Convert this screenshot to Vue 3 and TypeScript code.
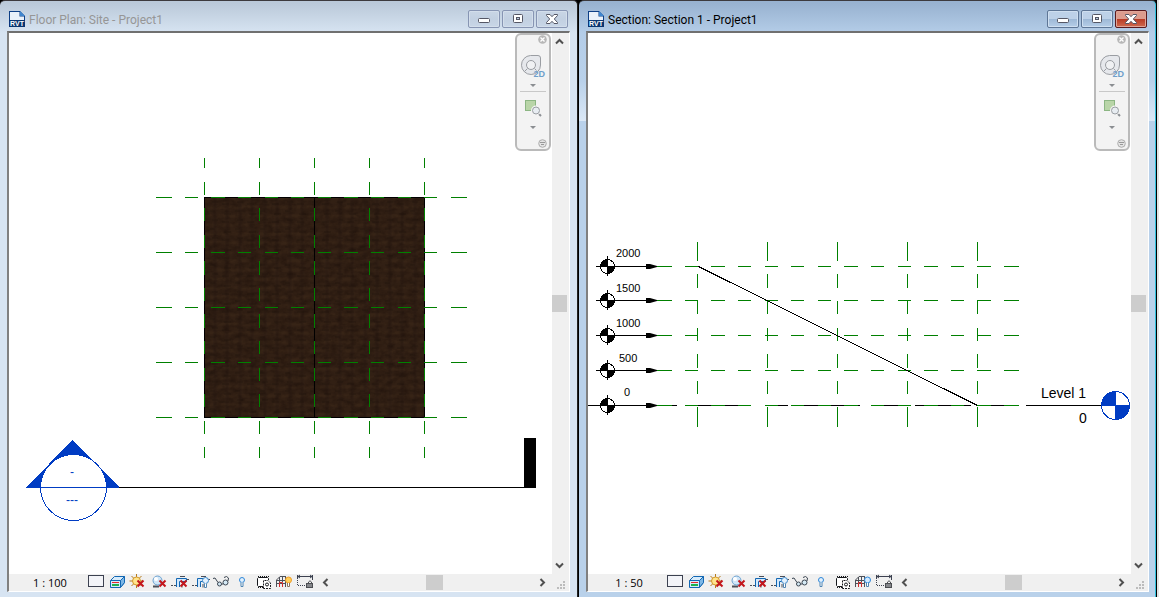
<script setup lang="ts">
type IconName =
  | 'detail' | 'style' | 'sun' | 'shadow' | 'crop' | 'cropRegion'
  | 'glasses' | 'bulb' | 'properties' | 'model' | 'constraints'

interface ViewWindow {
  id: string
  title: string
  scale: string
  active: boolean
}

const windows: ViewWindow[] = [
  { id: 'plan', title: 'Floor Plan: Site - Project1', scale: '1 : 100', active: false },
  { id: 'section', title: 'Section: Section 1 - Project1', scale: '1 : 50', active: true },
]

const tools: { name: IconName; label: string }[] = [
  { name: 'detail', label: 'Detail Level' },
  { name: 'style', label: 'Visual Style' },
  { name: 'sun', label: 'Sun Path Off' },
  { name: 'shadow', label: 'Shadows Off' },
  { name: 'crop', label: 'Do Not Crop View' },
  { name: 'cropRegion', label: 'Show Crop Region' },
  { name: 'glasses', label: 'Temporary Hide/Isolate' },
  { name: 'bulb', label: 'Reveal Hidden Elements' },
  { name: 'properties', label: 'Temporary View Properties' },
  { name: 'model', label: 'Analytical Model' },
  { name: 'constraints', label: 'Reveal Constraints' },
]

// Dashes are filled one-pixel bars, so their ends stay on whole pixels
type Span = [number, number]
const horizontal = (y: number, spans: Span[]) => spans.map(([a, b]) => `M${a} ${y}H${b}V${y + 1}H${a}Z`).join('')
const vertical = (x: number, spans: Span[]) => spans.map(([a, b]) => `M${x} ${a}V${b}H${x + 1}V${a}Z`).join('')

// Site plan grid
const planX = [195, 250, 305, 360, 415]
const planY = [164, 219, 274, 329, 384]
const planRowSpans: Span[] = [
  [147, 163], [176, 189], [202, 216], [229, 242], [256, 269], [282, 295],
  [309, 322], [335, 349], [362, 375], [389, 402], [415, 428], [442, 458],
]
const planColSpans: Span[] = [
  [125, 135], [149, 162], [175, 188], [202, 215], [228, 242], [255, 268],
  [281, 295], [308, 321], [335, 348], [361, 374], [388, 401], [414, 425],
]
const planGrid = [
  ...planY.map((y) => horizontal(y, planRowSpans)),
  ...planX.map((x) => vertical(x, planColSpans)),
]

// Section grid and levels
const sectionX = [109, 179, 249, 319, 389]
const levels = [
  { y: 233, label: '2000', x: 28, base: 224 },
  { y: 267, label: '1500', x: 28, base: 259 },
  { y: 302, label: '1000', x: 28, base: 294 },
  { y: 337, label: '500', x: 31, base: 329 },
  { y: 372, label: '0', x: 36, base: 363 },
]
const sectionRowSpans: Span[] = [
  [69, 84], [97, 110], [123, 137], [150, 163], [177, 190], [203, 216], [230, 243],
  [256, 270], [283, 296], [310, 323], [336, 350], [363, 376], [389, 403], [416, 431],
]
const sectionColSpans: Span[] = [
  [209, 228], [241, 255], [268, 281], [295, 308], [321, 335], [348, 361], [374, 394],
]
const sectionGrid = [
  ...levels.map((l) => horizontal(l.y, sectionRowSpans)),
  ...sectionX.map((x) => vertical(x, sectionColSpans)),
]
const groundLine = horizontal(372, [
  [0, 89], [97, 163], [177, 200], [203, 272], [283, 323], [327, 383], [389, 431], [438, 514],
])
</script>

<template>
  <main class="workspace">
    <section v-for="w in windows" :key="w.id" class="window" :class="{ active: w.active }">
      <header class="titlebar">
        <svg class="app-icon" width="16" height="16" viewBox="0 0 16 16" aria-hidden="true">
          <path d="M0 0H11L16 5V16H0Z" fill="#0d3f86" />
          <path d="M1 1H10.5V5.5H15V10H1Z" fill="#e9f1fa" />
          <path d="M11 0L16 5H11Z" fill="#3f86cf" />
          <path d="M0 9H16V16H0Z" fill="#093470" />
          <text x="8" y="15" class="app-icon-text">RVT</text>
        </svg>
        <h1 class="title">{{ w.title }}</h1>
        <div class="caption-buttons">
          <button type="button" class="caption" aria-label="Minimize">
            <svg width="12" height="12" viewBox="0 0 12 12"><rect x="0.5" y="5.5" width="11" height="4" rx="1" fill="#fff" stroke="#555765" /></svg>
          </button>
          <button type="button" class="caption" aria-label="Maximize">
            <svg width="12" height="12" viewBox="0 0 12 12"><rect x="1.5" y="1.5" width="9" height="8" rx="1" fill="#fff" stroke="#555765" /><rect x="4.5" y="4.5" width="3" height="2" fill="#b9cbe0" stroke="#555765" /></svg>
          </button>
          <button type="button" class="caption close" aria-label="Close">
            <svg width="12" height="12" viewBox="0 0 12 12"><path d="M.5 1.5H4L6 3.7 8 1.5H11.5V2.5L8.3 6 11.5 9.5V10.5H8L6 8.3 4 10.5H.5V9.5L3.7 6 .5 2.5Z" fill="#fff" stroke="#555765" /></svg>
          </button>
        </div>
      </header>

      <div class="client">
        <div class="view-row">
          <div class="canvas">
            <svg v-if="w.id === 'plan'" class="drawing" role="img" aria-label="Site plan">
              <defs>
                <pattern id="soil" width="25" height="18" patternUnits="userSpaceOnUse">
                  <rect width="25" height="18" fill="#322014" />
                  <path d="M0 3H25M0 12H25" stroke="#372416" stroke-width="3" />
                  <path d="M6 0V18M18 0V18" stroke="#281810" stroke-width="3" opacity=".4" />
                  <path d="M3 7H9M13 9H20M1 16H6M15 1H22" stroke="#28190f" />
                </pattern>
                <filter id="grain" x="0" y="0" width="100%" height="100%" color-interpolation-filters="sRGB">
                  <feTurbulence type="fractalNoise" baseFrequency="0.14 0.2" numOctaves="3" seed="4" />
                  <feColorMatrix values="0 0 0 0 0.1  0 0 0 0 0.05  0 0 0 0 0.03  0.9 0 0 0 -0.3" />
                </filter>
              </defs>
              <rect x="195" y="164" width="221" height="221" fill="url(#soil)" />
              <rect x="195" y="164" width="221" height="221" filter="url(#grain)" />
              <path d="M195.500 164.500H415.500V384.500H195.500ZM305.500 164.500V384.500" fill="none" stroke="#000" class="crisp" />
              <path v-for="d in planGrid" :key="d" :d="d" fill="#008000" class="crisp" />
              <rect x="110" y="454" width="406" height="1" />
              <rect x="515" y="405" width="12" height="50" />
              <path d="M63.500 407L110.500 454.500H17Z" fill="#003cc3" class="crisp" />
              <circle cx="64.500" cy="454.500" r="33" fill="#fff" stroke="#003cc3" class="crisp" />
              <rect x="17" y="454" width="93" height="1" fill="#003cc3" />
              <text x="63" y="443" class="mark">-</text>
              <text x="63" y="471" class="mark">---</text>
            </svg>

            <svg v-else class="drawing" role="img" aria-label="Section 1">
              <path :d="groundLine" class="crisp" />
              <path v-for="d in sectionGrid" :key="d" :d="d" fill="#008000" class="crisp" />
              <path d="M110.500 233.500L389.500 372.500" stroke="#000" class="crisp" />
              <g v-for="l in levels" :key="l.label">
                <g transform="translate(.5 .5)" class="crisp">
                  <circle cx="19" :cy="l.y" r="7" fill="#fff" stroke="#000" />
                  <path :d="`M19 ${l.y}V${l.y - 7}A7 7 0 0 0 12 ${l.y}ZM19 ${l.y}V${l.y + 7}A7 7 0 0 0 26 ${l.y}Z`" stroke="#000" />
                </g>
                <rect x="8" :y="l.y" width="61" height="1" />
                <rect x="19" :y="l.y - 10" width="1" height="20" />
                <path :d="`M58 ${l.y - 2}H62L69 ${l.y}V${l.y + 1}L62 ${l.y + 3}H58Z`" />
                <text :x="l.x" :y="l.base" class="level">{{ l.label }}</text>
              </g>
              <g transform="translate(.5 .5)" class="crisp">
                <circle cx="527" cy="372" r="14" fill="#fff" stroke="#003cc3" />
                <path d="M527 372V358A14 14 0 0 0 513 372ZM527 372V386A14 14 0 0 0 541 372Z" fill="#003cc3" stroke="#003cc3" />
              </g>
              <text x="453" y="365" class="datum">Level 1</text>
              <text x="491" y="390" class="datum">0</text>
            </svg>

            <nav class="navbar" aria-label="Navigation bar">
              <button type="button" class="dot" aria-label="Close bar">
                <svg width="9" height="9" viewBox="0 0 9 9"><circle cx="4.500" cy="4.500" r="4.300" fill="#b7b7b7" /><path d="M2.500 2.500L6.500 6.500M6.500 2.500L2.500 6.500" stroke="#fff" stroke-width="1.300" /></svg>
              </button>
              <button type="button" class="wheel" aria-label="2D steering wheel">
                <svg width="28" height="28" viewBox="0 0 28 28">
                  <path d="M11.500 3.500H19Q21.500 3.500 21.500 6V13A9.500 9.500 0 1 1 11.500 3.500Z" fill="#e6e8ec" stroke="#9a9da2" />
                  <circle cx="12" cy="13" r="4.500" fill="#f0f1f3" stroke="#9a9da2" />
                  <path d="M5.500 19.500L8.500 16.500M15.500 16.500L17.500 18.500" stroke="#9a9da2" />
                  <text x="26" y="25" class="two-d">2D</text>
                </svg>
              </button>
              <button type="button" class="drop" aria-label="Wheel options"><svg width="6" height="3" viewBox="0 0 6 3"><path d="M0 0H6L3 3Z" fill="#8b8e92" /></svg></button>
              <span class="rule"></span>
              <button type="button" class="zoom" aria-label="Zoom region">
                <svg width="20" height="20" viewBox="0 0 20 20">
                  <rect x="2.500" y="1.500" width="10" height="10" fill="#b9d5a8" stroke="#8cb683" />
                  <path d="M15 14L18 17" stroke="#8c8f94" stroke-width="2" />
                  <circle cx="13" cy="11.500" r="3.500" fill="#eef3f7" stroke="#f4f4f4" stroke-width="3" />
                  <circle cx="13" cy="11.500" r="3.500" fill="#e8edf2" stroke="#999da2" />
                </svg>
              </button>
              <button type="button" class="drop low" aria-label="Zoom options"><svg width="6" height="3" viewBox="0 0 6 3"><path d="M0 0H6L3 3Z" fill="#8b8e92" /></svg></button>
              <button type="button" class="dot last" aria-label="Customize bar">
                <svg width="9" height="9" viewBox="0 0 9 9"><circle cx="4.500" cy="4.500" r="3.800" fill="#e4e4e4" stroke="#adadad" /><path d="M2 3.500H7M3 5.500H6" stroke="#999" /></svg>
              </button>
            </nav>
          </div>

          <div class="vscroll">
            <button type="button" class="arrow" aria-label="Scroll up"><svg width="9" height="9" viewBox="0 0 9 9"><path d="M1 6.500L4.500 3L8 6.500" /></svg></button>
            <span class="thumb"></span>
            <button type="button" class="arrow" aria-label="Scroll down"><svg width="9" height="9" viewBox="0 0 9 9"><path d="M1 2.500L4.500 6L8 2.500" /></svg></button>
          </div>
        </div>

        <footer class="statusbar">
          <button type="button" class="scale">{{ w.scale }}</button>
          <button v-for="t in tools" :key="t.name" type="button" class="tool" :aria-label="t.label">
            <svg width="21" height="17" viewBox="0 0 21 17" fill="none">
              <template v-if="t.name === 'detail'">
                <rect x="1.500" y="1.500" width="15" height="11" fill="#f3f4f8" stroke="#3c4150" />
              </template>
              <template v-else-if="t.name === 'style'">
                <path d="M2.500 6.500L6.500 2.500H16.500V8.500L12.500 13.500H2.500Z" fill="#d6ebfb" stroke="#1267b3" />
                <path d="M12.500 13.500V6.500L16.500 2.500V8.500Z" fill="#7db7e6" stroke="#1267b3" />
                <path d="M2.500 6.500H12.500" stroke="#1267b3" />
                <path d="M4 8.500H11" stroke="#e5282f" /><path d="M4 11H11" stroke="#1fb14c" stroke-width="2" />
              </template>
              <template v-else-if="t.name === 'sun'">
                <path d="M7.500 0V14M.5 7H14M2.500 2L12.500 12M12.500 2L2.500 12" stroke="#b67a1d" />
                <circle cx="7.500" cy="7" r="4" fill="#ffe48b" stroke="#d4992b" />
                <path d="M8.500 6.500L14.500 12.500M14.500 6.500L8.500 12.500" stroke="#c3161c" stroke-width="2" />
              </template>
              <template v-else-if="t.name === 'shadow'">
                <path d="M3 12.500H9" stroke="#4b4f58" stroke-width="2" />
                <circle cx="7.500" cy="6.500" r="4.500" fill="#cfe5f7" stroke="#6da2d0" />
                <circle cx="6" cy="5" r="2" fill="#fff" />
                <path d="M9.500 6.500L15.500 12.500M15.500 6.500L9.500 12.500" stroke="#c3161c" stroke-width="2" />
              </template>
              <template v-else-if="t.name === 'crop' || t.name === 'cropRegion'">
                <path d="M0 11.500H2M3 11.500H5M9 2.500H14M16 5.500H18M11 13.500V10" stroke="#4a4e58" />
                <path d="M5.500 13V4.500H15.500V7.500H8.500V13" fill="#d3e8fb" stroke="#1267b3" />
                <path v-if="t.name === 'crop'" d="M9.500 6.500L15.500 12.500M15.500 6.500L9.500 12.500" stroke="#c3161c" stroke-width="2" />
                <template v-else>
                  <circle cx="13.500" cy="6.500" r="3" fill="#e3f1fd" stroke="#3a87c9" />
                  <path d="M12.500 9.500V13.500H14.500V9.500" fill="#fff" stroke="#4e84b2" />
                </template>
              </template>
              <template v-else-if="t.name === 'glasses'">
                <path d="M0 4.500L2 4L5 8.500M8.500 10.500L10.500 9.500M15 7L15.500 4L13.500 2.500L11 3.500" stroke="#3c4652" />
                <circle cx="6.500" cy="10" r="2" fill="#d4e9f4" stroke="#3c4652" />
                <circle cx="12.500" cy="8.500" r="2.500" fill="#d4e9f4" stroke="#3c4652" />
              </template>
              <template v-else-if="t.name === 'bulb'">
                <circle cx="8" cy="6" r="2.500" fill="#e3f1fd" stroke="#2f87d8" />
                <path d="M7 8.500V12.500H9V8.500" fill="#fff" stroke="#4e84b2" />
              </template>
              <template v-else-if="t.name === 'properties'">
                <path d="M8 12.500H3.500L2.500 11.500V4.500L3.500 3.500H12.500L13.500 4.500V6" fill="#fff" stroke="#16181c" />
                <path d="M3 2.500H14M3 13.500H8" stroke="#16181c" stroke-dasharray="1 1" />
                <path d="M8.500 14.500V6.500H13L15.500 9V14.500Z" fill="#fff" stroke="#16181c" stroke-dasharray="2 1" />
                <circle cx="12" cy="10.500" r="1.500" stroke="#16181c" />
              </template>
              <template v-else-if="t.name === 'model'">
                <path d="M.5 13V6L4 2.500H10M.5 6.500H10M3.500 13V3M6.500 8V2.500M9.500 13V2.500M.5 9.500H10" stroke="#4d5159" />
                <path d="M3.500 13V8.500H6.500V13" stroke="#d32c2c" />
                <circle cx="12.500" cy="6" r="3" :fill="w.active ? '#d3eaff' : '#ffd05a'" :stroke="w.active ? '#2f87d8' : '#ef9d27'" />
                <path d="M11.500 9V12.500H13.500V9" fill="#fff" :stroke="w.active ? '#4e84b2' : '#8d7358'" />
              </template>
              <template v-else>
                <path d="M.5 1V5M15.500 1V6M1 2.500H15M3 1L1 2.500L3 4M13 1L15 2.500L13 4" stroke="#3c4150" />
                <path d="M.5 6V12M1 11.500H9" stroke="#3c4150" stroke-dasharray="1 1" />
                <path d="M11.500 9V8Q13 5.500 14.500 8V9" stroke="#4c4e52" /><rect x="9.500" y="9.500" width="6" height="4" fill="#85878b" stroke="#4c4e52" />
              </template>
            </svg>
          </button>
          <div class="hscroll">
            <button type="button" class="arrow" aria-label="Scroll left"><svg width="9" height="9" viewBox="0 0 9 9"><path d="M6.500 1L3 4.500L6.500 8" /></svg></button>
            <span class="thumb"></span>
            <button type="button" class="arrow" aria-label="Scroll right"><svg width="9" height="9" viewBox="0 0 9 9"><path d="M2.500 1L6 4.500L2.500 8" /></svg></button>
          </div>
          <svg class="grip" width="19" height="17" viewBox="0 0 19 17" aria-hidden="true">
            <path d="M13 7h2v2h-2zM10 10h2v2h-2zM13 10h2v2h-2zM7 13h2v2H7zM10 13h2v2h-2zM13 13h2v2h-2z" fill="#bcbcbc" />
          </svg>
        </footer>
      </div>
    </section>
  </main>
</template>

<style>
body { margin: 0; overflow: hidden; }
</style>

<style scoped>
* { box-sizing: border-box; }
button { margin: 0; padding: 0; border: 0; background: none; color: inherit; font: inherit; }
svg { display: block; flex: none; }
.workspace {
  display: grid;
  grid-template-columns: 1fr 1fr;
  gap: 1px;
  height: 100vh;
  padding-right: 2px;
  background: linear-gradient(to left, #e4e4e4 2px, #000 2px);
  font-family: "Open Sans", "Noto Sans", sans-serif;
  font-size: 12px;
}
.window {
  display: flex;
  flex-direction: column;
  min-width: 0;
  min-height: 0;
  padding: 0 7px 5px;
  border-top: 1px solid #3c3a3e;
  border-right: 1px solid #222;
  border-radius: 5px 5px 0 0;
  background: linear-gradient(#bac9d9 2px, #d7e4f2 32px);
}
.window.active {
  border-right-color: #000;
  background: linear-gradient(#98b2d0 2px, #b4cde8 32px, #b9d1ea 80px, #dbe8f6 120px, #b9d1ea 120px);
  box-shadow: inset -1px 0 #2fc0dc;
}
.titlebar { display: flex; align-items: center; height: 30px; flex: none; padding: 6px 2px 0; }
.app-icon-text { font: bold 7px "Liberation Sans", sans-serif; fill: #fff; text-anchor: middle; }
.title {
  flex: 1;
  min-width: 0;
  margin: 0 0 0 4px;
  padding-top: 2px;
  overflow: hidden;
  white-space: nowrap;
  font-family: Roboto, "Open Sans", sans-serif;
  font-size: 12px;
  font-weight: 400;
  line-height: 16px;
  color: #969696;
}
.active .title { color: #000; }
.caption-buttons { display: flex; gap: 2px; }
.caption {
  display: flex;
  align-items: center;
  justify-content: center;
  width: 32px;
  height: 18px;
  border: 1px solid #8795b3;
  border-radius: 2px;
  background: linear-gradient(#c9d6e5, #c2d0e1 50%, #c8d6e7);
  box-shadow: inset 0 0 0 1px #d3deeb;
}
.active .caption {
  border-color: #5e7696;
  background: linear-gradient(#bdd1e8 50%, #9db8d6 50%, #b6cee8);
  box-shadow: inset 0 0 0 1px #cfdff0;
}
.active .caption.close {
  border-color: #5a1a1e;
  background: linear-gradient(#dc9c8e 50%, #b83a24 50%, #cf6b50);
  box-shadow: inset 0 0 0 1px #dfa598;
}
.client {
  display: flex;
  flex: 1;
  flex-direction: column;
  min-height: 0;
  border: solid;
  border-width: 2px 1px 1px 2px;
  border-color: #707070 #fff #fff #808080;
  background: #f0f0f0;
}
.view-row { display: flex; flex: 1; min-height: 0; }
.canvas { position: relative; flex: 1; min-width: 0; overflow: hidden; background: #fff; }
.drawing { width: 100%; height: 100%; }
.crisp { shape-rendering: crispEdges; }
.mark { font: 12px "Liberation Sans", sans-serif; fill: #003cc3; text-anchor: middle; }
.level { font: 11px "Liberation Sans", sans-serif; }
.datum { font: 14px "Liberation Sans", sans-serif; }
.navbar {
  position: absolute;
  top: 0;
  right: 1px;
  display: flex;
  flex-direction: column;
  align-items: center;
  width: 36px;
  height: 118px;
  border: 2px solid #bababa;
  border-radius: 6px;
  background: #f3f3f3;
}
.two-d { font: bold 9px "Liberation Sans", sans-serif; fill: #6f9fcb; text-anchor: end; }
.dot { align-self: flex-end; height: 9px; margin-right: 2px; }
.wheel { height: 28px; margin: 8px 0 0; }
.drop { height: 3px; margin-top: 4px; }
.rule { width: 26px; height: 1px; margin-top: 4px; background: #c8c8c8; }
.zoom { height: 20px; margin-top: 7px; }
.low { margin-top: 7px; }
.last { margin-top: 10px; }
.vscroll, .hscroll { display: flex; justify-content: space-between; }
.vscroll { flex-direction: column; align-items: flex-start; width: 17px; }
.hscroll { flex: 1; min-width: 0; padding-top: 1px; align-items: flex-start; }
.thumb { width: 17px; height: 15px; background: #cdcdcd; }
.vscroll .thumb { width: 15px; height: 17px; }
.arrow { display: flex; align-items: center; justify-content: center; width: 15px; height: 17px; }
.hscroll .arrow { height: 15px; }
.arrow path { fill: none; stroke: #505050; stroke-width: 2; }
.statusbar { display: flex; height: 17px; flex: none; }
.scale { width: 66px; margin: 0 4px 0 8px; font-size: 11px; line-height: 17px; text-align: center; }
.tool { width: 21px; height: 17px; }
</style>
